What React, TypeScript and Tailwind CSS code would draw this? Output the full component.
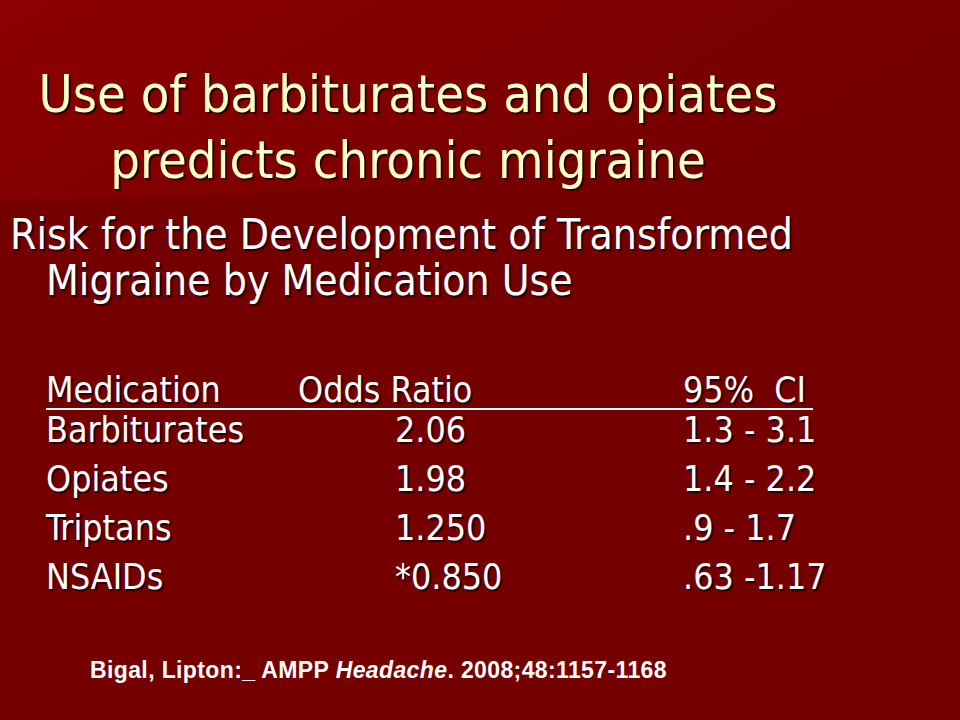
import React from "react";

const rows = [
  ["Barbiturates", "2.06", "1.3 - 3.1"],
  ["Opiates", "1.98", "1.4 - 2.2"],
  ["Triptans", "1.250", ".9 - 1.7"],
  ["NSAIDs", "*0.850", ".63 -1.17"],
];

export default function App() {
  return (
    <div className="relative w-[960px] h-[720px] overflow-hidden bg-[#740000]">
      <svg className="absolute inset-0" width="960" height="720" viewBox="0 0 960 720">
        <defs>
          <linearGradient id="g" x1="0" y1="0" x2="1" y2="0.35">
            <stop offset="0" stopColor="#8c0000" />
            <stop offset="0.45" stopColor="#820000" />
            <stop offset="1" stopColor="#740000" />
          </linearGradient>
        </defs>
        <path d="M0 0 H960 V150 Q600 170 400 184 T0 200 Z" fill="url(#g)" />
      </svg>
      <div className="relative flex flex-col [font-family:'DejaVu_Sans_Condensed','DejaVu_Sans',sans-serif]">
        <div className="pt-[61px] w-[816px] text-center text-[52px] leading-[66px] text-[#ffffc8] [text-shadow:2px_2px_1px_#2a0000]">
          <div>Use of barbiturates and opiates</div>
          <div>predicts chronic migraine</div>
        </div>
        <div className="mt-[19px] pl-[46px] -indent-[36px] text-[42.3px] leading-[46px] text-white [text-shadow:2px_2px_1px_#2a0000]">
          Risk for the Development of Transformed Migraine by Medication Use
        </div>
        <div className="mt-[68px] ml-[46px] text-[35.5px] text-white [text-shadow:2px_2px_1px_#2a0000]">
          <div className="flex w-[767px] leading-[36px] border-b-2 border-white">
            <div className="w-[252px]">Medication</div>
            <div className="w-[385px]">Odds Ratio</div>
            <div className="whitespace-pre">95%  CI</div>
          </div>
          <div className="-mt-[5px]">
            {rows.map((r) => (
              <div key={r[0]} className="flex leading-[49px]">
                <div className="w-[349px]">{r[0]}</div>
                <div className="w-[288px]">{r[1]}</div>
                <div>{r[2]}</div>
              </div>
            ))}
          </div>
        </div>
        <div className="mt-[52px] ml-[90px] text-[23px] tracking-[0.38px] font-bold text-white [font-family:'Liberation_Sans',Arial,sans-serif]">
          Bigal, Lipton:_ AMPP <i>Headache</i>. 2008;48:1157-1168
        </div>
      </div>
    </div>
  );
}
